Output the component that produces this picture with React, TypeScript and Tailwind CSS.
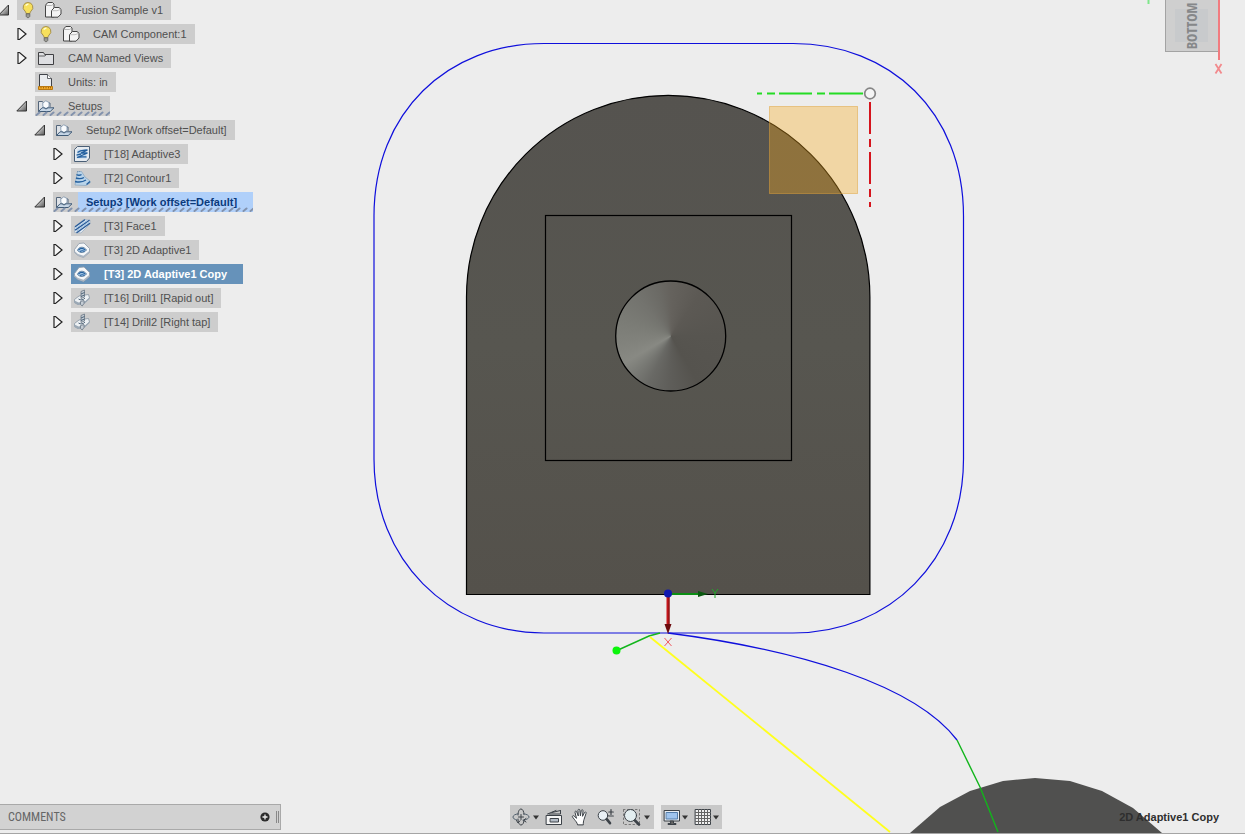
import React from 'react';

type IconName = 'bulb' | 'component' | 'folder' | 'units' | 'setup' | 'adaptive3d' | 'contour' | 'face' | 'adaptive2d' | 'drill';

interface TreeNode {
  label: string;
  indent: string;
  icons: IconName[];
  arrow?: 'open' | 'closed';
  state?: 'active' | 'selected';
  hatched?: boolean;
}

const NODES: TreeNode[] = [
  { label: 'Fusion Sample v1', indent: 'pl-0', icons: ['bulb', 'component'], arrow: 'open' },
  { label: 'CAM Component:1', indent: 'pl-[18px]', icons: ['bulb', 'component'], arrow: 'closed' },
  { label: 'CAM Named Views', indent: 'pl-[18px]', icons: ['folder'], arrow: 'closed' },
  { label: 'Units: in', indent: 'pl-[18px]', icons: ['units'] },
  { label: 'Setups', indent: 'pl-[18px]', icons: ['setup'], arrow: 'open', hatched: true },
  { label: 'Setup2 [Work offset=Default]', indent: 'pl-[36px]', icons: ['setup'], arrow: 'open' },
  { label: '[T18] Adaptive3', indent: 'pl-[54px]', icons: ['adaptive3d'], arrow: 'closed' },
  { label: '[T2] Contour1', indent: 'pl-[54px]', icons: ['contour'], arrow: 'closed' },
  { label: 'Setup3 [Work offset=Default]', indent: 'pl-[36px]', icons: ['setup'], arrow: 'open', state: 'active', hatched: true },
  { label: '[T3] Face1', indent: 'pl-[54px]', icons: ['face'], arrow: 'closed' },
  { label: '[T3] 2D Adaptive1', indent: 'pl-[54px]', icons: ['adaptive2d'], arrow: 'closed' },
  { label: '[T3] 2D Adaptive1 Copy', indent: 'pl-[54px]', icons: ['adaptive2d'], arrow: 'closed', state: 'selected' },
  { label: '[T16] Drill1 [Rapid out]', indent: 'pl-[54px]', icons: ['drill'], arrow: 'closed' },
  { label: '[T14] Drill2 [Right tap]', indent: 'pl-[54px]', icons: ['drill'], arrow: 'closed' },
];

const ICONS: Record<IconName, React.ReactNode> = {
  bulb: (
    <>
      <path d="M9 1.5a4.8 4.8 0 0 0-3 8.6c.7.7.9 1.3 1 2.4h4c.1-1.1.3-1.7 1-2.4a4.8 4.8 0 0 0-3-8.6z" fill="#f7e05c" stroke="#a8914a" />
      <path d="M6.8 4.6c.6-1 1.6-1.4 2.6-1.3" fill="none" stroke="#fffbd0" strokeWidth="1.6" />
      <path d="M7.2 12.8h3.6v2.6l-1 1.2H8.2l-1-1.2z" fill="#9a9a94" stroke="#5f5f5c" strokeWidth=".8" />
    </>
  ),
  component: (
    <g fill="#f4f4f4" stroke="#444" strokeLinejoin="round">
      <path d="M1.500 4.200 3.800 1.500h4.700L10 3v13H1.500z" />
      <path d="M1.500 4.500H7.500L10 3" fill="none" stroke="#999" strokeWidth=".7" />
      <path d="M7.500 9.500 10.500 6.500h4.500l2 1.800v4.700l-3 3.200H7.500z" />
      <path d="M7.500 9.700h5.500l4-1.400" fill="none" stroke="#aaa" strokeWidth=".7" />
    </g>
  ),
  folder: (
    <>
      <path d="M1.500 15.500v-12h5l1.200 2h8.800v10z" fill="#dedfe2" stroke="#3f3f42" />
      <path d="M2 7h6l1-1.200" fill="none" stroke="#3f3f42" strokeWidth=".8" />
    </>
  ),
  units: (
    <>
      <path d="M2.500 1.500h8l4 4v9h-12z" fill="#e9ebee" stroke="#3f4248" />
      <path d="M10.500 1.500v4h4" fill="#fff" stroke="#3f4248" strokeWidth=".8" />
      <path d="M1.500 13.500h14v3h-14z" fill="#f2a928" stroke="#b97812" />
      <path d="M4 14v1.400m2.500-1.400v1.400m2.500-1.400v1.400m2.500-1.400v1.400m2-1.400v1.400" stroke="#8d5605" strokeWidth=".8" />
    </>
  ),
  setup: (
    <>
      <path d="M1.500 14.500v-10h4l1 1.500h6.500v4" fill="#dfe3e8" stroke="#53657a" />
      <path d="m5.800 6 3-2.200L12 5.500v4l-3 2-3.200-2z" fill="#f9fbfd" stroke="#7b92aa" strokeWidth=".8" />
      <path d="M1.500 14.500 5 10.800h2l2 1.200 2-1.200h6l-3.800 3.700z" fill="#c5d5e5" stroke="#405b77" />
    </>
  ),
  adaptive3d: (
    <>
      <path d="M1.500 4.500 4.500 1.500h12v11.500l-3 3.500h-12z" fill="#e6ebf0" stroke="#4a5f76" />
      <path d="M4.500 4.500h9v9h-10z" fill="#c3d9ed" />
      <path d="M4.500 7.500c3-2.500 5-2 10-2.500L8 8.200l6.500-.2L4 12.500c3-1 5-.8 9.500-.5M3.500 10.200 8 9" fill="none" stroke="#235f9e" strokeWidth="1.300" />
    </>
  ),
  contour: (
    <>
      <path d="M2 16 4.500 2.500h4l3.500 5.500 5 4v2L13 16.500z" fill="#b9d4ea" stroke="#8ea9c2" strokeWidth=".8" />
      <path d="M4 2.500h3.500" stroke="#7898b6" strokeDasharray="1 1" />
      <path d="M3.500 5.500c1.500 1 3.500 1 5 0M3 9c3 1 5.500 1 8-.5M2 12.500c4 1 8 .5 11-1.500M13.500 15.500l3.500-3" fill="none" stroke="#235f9e" strokeWidth="1.400" />
    </>
  ),
  face: (
    <>
      <path d="m1.500 10 9-7.500 6.500.5v4l-9 9-6.500-.5z" fill="#dfe8f1" stroke="#a3b2c2" strokeWidth=".8" />
      <path d="m2.500 9.500 9-6.500M2.500 12.800 16 3.500M4 15.500 16.500 6.500" fill="none" stroke="#2b5c99" strokeWidth="1.500" strokeLinecap="round" />
      <path d="m3 11.200 11-7.600M3.500 14.200 16 5" fill="none" stroke="#9dc1e2" />
    </>
  ),
  adaptive2d: (
    <>
      <path d="M1.500 8.500 6 2.500l5-.5 5.500 5.500v4l-6 5-5.500-2-3.500-3z" fill="#f5f7f9" stroke="#8e9aa8" strokeWidth=".8" />
      <path d="m1.500 10 3.500 3 5.500 1.700 6-5v2l-6 4.800-5.500-2-3.500-3z" fill="#aab5c1" />
      <path d="M4.500 9.500c1-4 6.500-4.500 9-.5-2.500 3-6 3.500-9 .5z" fill="#a9cbe8" stroke="#4d6f90" strokeWidth=".8" />
      <path d="M5.500 9c2-2 4.500-2 6.500 0M7 10.500c1.500-1 3-1 4.500 0" fill="none" stroke="#235f9e" strokeWidth="1.200" />
    </>
  ),
  drill: (
    <>
      <path d="m1.500 10.500 4.500-3.500 9.500-1.500 1 3.500-4.500 4.500-7 2-3.500-2z" fill="#edf1f4" stroke="#8794a2" strokeWidth=".8" />
      <path d="m1.500 11.500 4 2 7-1.500 4-3.500V10L12 14.200l-7 1.800-3.500-2z" fill="#9ba8b5" />
      <path d="M8 2.500 11.500 1v7L8 9.500zM7.500 12.500l3.500-1v3l-1.800 2.500-1.700-1.500z" fill="#c5cdd5" stroke="#697785" strokeWidth=".8" />
      <path d="m8 5 3.500-1.500M8 7.500 11.500 6M5.500 10c2 1.500 5 1 6.500-1" fill="none" stroke="#4e6478" />
    </>
  ),
};

const Arrow: React.FC<{ kind: 'open' | 'closed' }> = ({ kind }) => (
  <svg width="12" height="14" viewBox="0 0 12 14" aria-hidden="true">
    {kind === 'open' ? (
      <path d="M10.500 2v10H.8z" fill="url(#arrow-fill)" stroke="#333" />
    ) : (
      <path d="M1 1.500h1.500L9 7l-6.500 5.500H1z" fill="#f6f6f6" stroke="#222" strokeWidth="1.200" />
    )}
  </svg>
);

const TreeRow: React.FC<{ node: TreeNode }> = ({ node }) => {
  const chip = node.state === 'selected' ? 'bg-[#6692ba]' : 'bg-[#cdcdcd]';
  const text =
    node.state === 'selected'
      ? 'font-bold text-white pr-4'
      : node.state === 'active'
        ? 'font-bold text-[#0b3a7c] bg-[#b0d0fa] pr-4'
        : 'text-[#505050] pr-2';

  return (
    <li className={`flex h-5 items-center ${node.indent}`}>
      <div className="flex w-[17px] shrink-0">
        {node.arrow && (
          <button type="button" aria-label={`Toggle ${node.label}`} className={node.arrow === 'open' ? '-ml-[2px]' : '-ml-[1px]'}>
            <Arrow kind={node.arrow} />
          </button>
        )}
      </div>
      <button type="button" className={`relative flex h-5 items-center whitespace-nowrap ${chip}`}>
        {node.icons.map((name) => (
          <span key={name} className="w-[25px] pl-[2px]">
            <svg width="18" height="18" viewBox="0 0 18 18" aria-hidden="true">{ICONS[name]}</svg>
          </span>
        ))}
        <span className={`flex h-5 items-center pl-2 ${text}`}>{node.label}</span>
        {node.hatched && (
          <svg className="absolute bottom-0 left-0 h-[5px] w-full" aria-hidden="true">
            <rect width="100%" height="5" fill="url(#hatch)" />
          </svg>
        )}
      </button>
    </li>
  );
};

const Viewport: React.FC = () => (
  <svg className="absolute inset-0 h-full w-full" role="img" aria-label="Model viewport">
    <defs>
      <linearGradient id="arrow-fill" x1="0" y1="0" x2="1" y2="1">
        <stop offset=".3" stopColor="#ddd" />
        <stop offset="1" stopColor="#555" />
      </linearGradient>
      <pattern id="hatch" width="7" height="5" patternUnits="userSpaceOnUse">
        <path d="M1.500 4 4.500 1.500" stroke="#8292ad" strokeWidth="2" strokeLinecap="round" />
      </pattern>
      <linearGradient id="part-fill" x1="0" y1="0" x2="0" y2="1">
        <stop offset="0" stopColor="#55534f" />
        <stop offset=".5" stopColor="#575650" />
        <stop offset="1" stopColor="#54514b" />
      </linearGradient>
    </defs>

    {/* Second body, cut off by the bottom edge */}
    <path d="M910 833 940 807 970 791 1003 781 1035 778 1070 781 1102 791 1133 808 1162 833z" fill="#50504f" />

    {/* Part */}
    <path d="M466.500 594.500V297a201.700 201.700 0 0 1 403.400 0v297.500z" fill="url(#part-fill)" stroke="#000" strokeWidth="1.200" />
    <rect x="545.500" y="215.500" width="246" height="245" fill="none" stroke="#000" strokeWidth="1.200" />
    <foreignObject x="616" y="281" width="110" height="110">
      <div className="h-full w-full rounded-full bg-[conic-gradient(#65625d,#5c5954_35deg,#575550_90deg,#55534e_150deg,#5e5d59_180deg,#696965_205deg,#7a7b76_225deg,#888983_240deg,#81827c_262deg,#7a7b75_290deg,#73736e_320deg,#6b6a65_345deg,#65625d)]" />
    </foreignObject>
    <circle cx="670.700" cy="336" r="55" fill="none" stroke="#000" strokeWidth="1.300" />

    {/* Stock corner */}
    <rect x="769.500" y="106.500" width="88" height="87" fill="#f9ab1e" fillOpacity=".35" stroke="#e0a23a" strokeOpacity=".5" />
    <path d="M863 93.500H829M825 93.500H817M812 93.500H779M775 93.500H767M762 93.500H757" stroke="#24dc24" strokeWidth="2" />
    <path d="M870 102v32M870 139v8M870 152v32M870 189v8M870 202v5" stroke="#d5141c" strokeWidth="2" />
    <circle cx="870" cy="93.500" r="5.300" fill="#f4f4f4" stroke="#858585" strokeWidth="1.700" />

    {/* Toolpath */}
    <path d="M544 43.500H793C890 43.500 963.500 112 963.500 216V459C963.500 560 890 633 793 633H544C448 633 374 560 374 459V216C374 112 448 43.500 544 43.500z" fill="none" stroke="#0f0fdc" strokeWidth="1.200" />
    <path d="M668 633C800 650 915 685 957 740" fill="none" stroke="#0f0fdc" strokeWidth="1.300" />
    <path d="M957 740 980 787 998 832M617 650.500 649 636 660 633" fill="none" stroke="#12b51c" strokeWidth="1.400" />
    <path d="M650 637 890 832" stroke="#ffff1e" strokeWidth="1.800" />
    <circle cx="616.500" cy="650.500" r="4" fill="#0cf50c" />

    {/* Origin triad */}
    <path d="M668 594H700" stroke="#0b8e14" strokeWidth="2" />
    <path d="M698 591 708 594 698 597z" fill="#0a5910" />
    <path d="M668 596V625" stroke="#c4161c" strokeWidth="3" />
    <path d="M669 596V625" stroke="#7c1013" strokeWidth="1" />
    <path d="M664.500 624H671.500L668 634z" fill="#6c0a0d" />
    <circle cx="668" cy="593.500" r="4" fill="#1018b0" />
    <path d="m712 589 3 4 3-4m-3 4v5" fill="none" stroke="#1faa27" />
    <path d="m664.500 638 7 8m0-8-7 8" stroke="#ef5b62" />
  </svg>
);

const ViewCube: React.FC = () => (
  <svg className="absolute top-0 right-0" width="105" height="80" aria-label="View cube">
    <path d="M8.500 0v4" stroke="#7fe68a" strokeWidth="2" />
    <rect x="25.500" y="-4" width="53" height="55.500" fill="#cfcfcf" stroke="#a3a3a3" />
    <rect x="35" y="9" width="33" height="33" fill="#c8cacc" />
    <text
      transform="translate(57 49) rotate(-90)"
      className="fill-[#858789] font-['Liberation_Sans_Narrow','Open_Sans_Condensed','Roboto_Condensed','Roboto',sans-serif] text-[14px] font-bold"
    >
      BOTTOM
    </text>
    <path d="M79 0V60" stroke="#f27b7f" strokeWidth="2" />
    <path d="m75.500 64 6 9.500m0-9.500-6 9.500" stroke="#f28a8d" strokeWidth="1.800" />
  </svg>
);

const Caret = () => (
  <svg width="6" height="5" viewBox="0 0 6 5" aria-hidden="true">
    <path d="M0 .5h6L3 4.500z" fill="#333" />
  </svg>
);

const ToolButton: React.FC<{ label: string; className: string; caret?: boolean; children: React.ReactNode }> = ({ label, className, caret, children }) => (
  <button type="button" aria-label={label} className={`flex h-6 items-center ${className}`}>
    <svg width="20" height="20" viewBox="0 0 20 20" fill="none" stroke="#3c4248" strokeLinejoin="round" strokeLinecap="round" aria-hidden="true">
      {children}
    </svg>
    {caret && <Caret />}
  </button>
);

const NavBar = () => (
  <div className="flex gap-[7px]">
    <div className="flex bg-[#c8c8c8]">
      <ToolButton label="Orbit" className="w-8 gap-[2px] pl-[1px]" caret>
        <path d="M7 8c0-3.500 1.300-6 3-6s3 2.500 3 5.500M7 12c0 3.500 1.300 6 3 6s2.800-2 3-4.500" />
        <path d="M13 6.800c3 .5 5 1.700 5 3.200s-3.500 3.200-6 3.200M6 13C3.500 12.500 2 11.500 2 10s2-2.800 5-3.200" stroke="#53616e" />
        <path d="M10 7.500v5M7.500 10h5M15 11.500l-2.500 1.700 2.500 1.800M5.500 13.500 7 16l2-2.200" />
      </ToolButton>
      <ToolButton label="Look at" className="w-[25px] justify-center">
        <path d="M2.500 8.500h15v9h-15z" fill="#f5f5f5" />
        <path d="M6.500 11.500h8v3.500h-8z" fill="#b4bcc6" />
        <path d="M3.500 7 12 3.500M5 7h11.500V3.500M8 5.500l8.500-2" />
      </ToolButton>
      <ToolButton label="Pan" className="w-[26px] justify-center">
        <path
          d="M7.500 17.500c-.3-2-2-3.500-3.300-5.300L2.500 10c-.6-1 .8-1.800 1.600-1l2.400 2.300L5 5.300c-.3-1.300 1.300-1.600 1.700-.5L8.300 9 8 3.300c0-1.300 1.700-1.400 1.800-.1l.6 5.600.9-5.300c.3-1.200 1.900-.9 1.700.3L12.500 9.300l2-3.800c.6-1 2-.4 1.600.7L14 12.500c-.6 1.800-.7 3-.7 5z"
          fill="#fff"
        />
      </ToolButton>
      <ToolButton label="Zoom" className="w-[26px] justify-center">
        <circle cx="7" cy="8.500" r="4.800" fill="#eaf1f6" />
        <path d="m10.700 12.200 3.300 4" strokeWidth="2.600" />
        <path d="M15 2.500v5M12.800 5h4.500M12.800 9h4.500" strokeWidth="1.200" />
      </ToolButton>
      <ToolButton label="Fit" className="w-[35px] gap-[2px] pl-[3px]" caret>
        <path d="M1.500 2.500h16v15h-16z" stroke="#777" strokeDasharray="1.500 2.500" />
        <circle cx="8.500" cy="8.500" r="6" fill="#e3eef0" />
        <path d="m13 13.500 4 4" strokeWidth="2.600" />
      </ToolButton>
    </div>
    <div className="flex bg-[#c8c8c8]">
      <ToolButton label="Display settings" className="w-[30px] pl-[1px]" caret>
        <path d="M2.500 3.500h15v10.500h-15z" fill="#e8edf2" />
        <path d="M4.500 5.500h11v6.500h-11z" fill="#9fc4ee" stroke="#537caa" />
        <path d="M8.500 14h3v2.500h2.500v1H6v-1h2.500z" fill="#666" />
      </ToolButton>
      <ToolButton label="Grid settings" className="w-[31px] pl-[2px]" caret>
        <path d="M2.500 2.500h15v15h-15z" fill="#f1f1f1" />
        <path d="M5.500 2.500v15M8.500 2.500v15M11.500 2.500v15M14.500 2.500v15M2.500 5.500h15M2.500 8.500h15M2.500 11.500h15M2.500 14.500h15" stroke="#666" />
      </ToolButton>
    </div>
  </div>
);

const CommentsPanel = () => (
  <div className="flex h-[26px] w-[281px] items-center border border-l-0 border-[#a9a9a9] bg-[#d2d2d2] pl-2">
    <span className="font-['Roboto_Condensed','Roboto','Liberation_Sans',sans-serif] text-[12px] text-[#666]">COMMENTS</span>
    <button type="button" aria-label="Add comment" className="mr-[6px] ml-auto">
      <svg width="10" height="10" viewBox="0 0 10 10" aria-hidden="true">
        <circle cx="5" cy="5" r="4.600" fill="#2c2c2c" />
        <path d="M5 2.500v5M2.500 5h5" stroke="#eee" strokeWidth="1.300" />
      </svg>
    </button>
    <span className="mr-[1px] h-3 w-[3px] border-x border-[#888]" />
  </div>
);

export default function App() {
  return (
    <main className="relative flex min-h-screen flex-col overflow-hidden border-b border-[#a5a5a5] bg-[#ededed] font-['Liberation_Sans',Arial,sans-serif] text-[11px] leading-4">
      <Viewport />
      <ViewCube />
      <ul className="relative flex flex-col gap-1 self-start">
        {NODES.map((node) => (
          <TreeRow key={node.label} node={node} />
        ))}
      </ul>
      <footer className="relative mt-auto mb-[3px] grid grid-cols-[1fr_auto_1fr] items-center pr-[14px]">
        <CommentsPanel />
        <NavBar />
        <p className="justify-self-end pr-3 font-bold text-[#2e2e2e]">2D Adaptive1 Copy</p>
      </footer>
    </main>
  );
}
